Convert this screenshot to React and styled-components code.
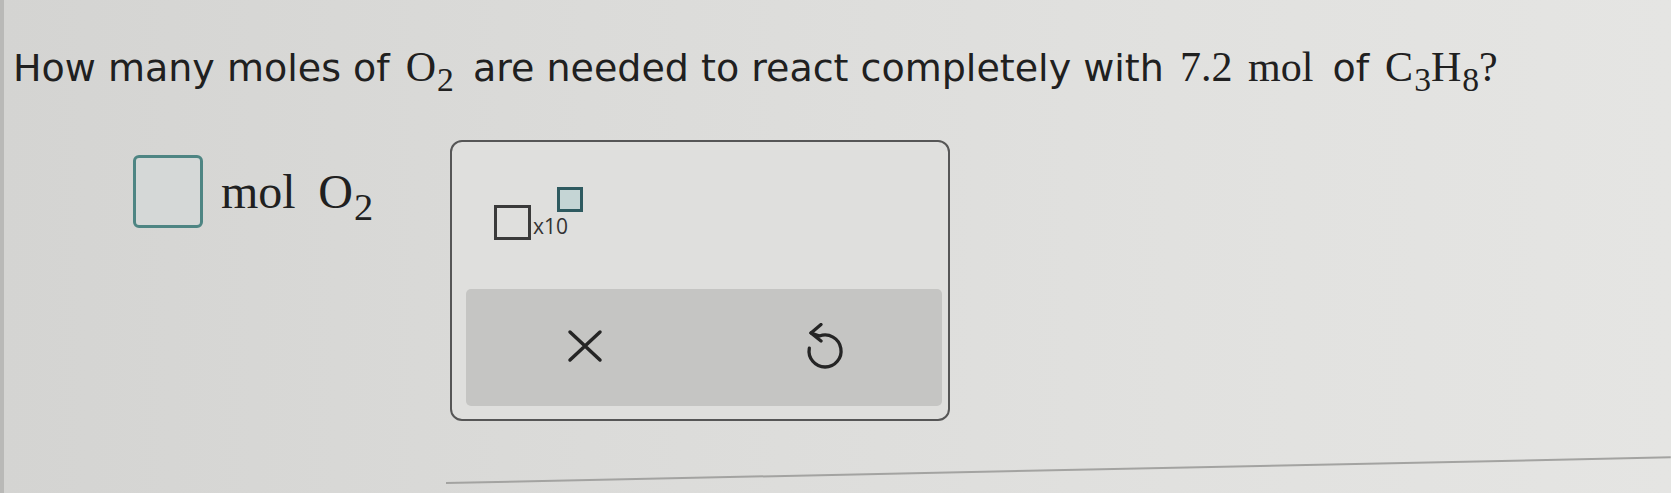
import React from 'react'
import styled, { createGlobalStyle } from 'styled-components'

const GlobalStyle = createGlobalStyle`
  html, body {
    margin: 0;
    padding: 0;
    background: #dcdcda;
  }
`;

const Page = styled.div`
  width: 1671px;
  height: 493px;
  box-sizing: border-box;
  overflow: hidden;
  padding: 42px 0 0 9px;
  background: linear-gradient(90deg, #d4d4d2 0%, #dbdbd9 35%, #e1e1df 70%, #e5e5e3 100%);
  border-left: 4px solid #b9b9b7;
  display: flex;
  flex-direction: column;
  color: #202020;
`;

const Question = styled.div`
  font-family: "DejaVu Sans", Verdana, sans-serif;
  font-size: 38px;
  line-height: 50px;
  height: 50px;
  white-space: nowrap;
`;

const Chem = styled.span`
  font-family: "Liberation Serif", "Times New Roman", serif;
  font-size: 42px;
  margin: 0 7px 0 4px;
  word-spacing: 0.12em;
`;

const Sub = styled.sub`
  font-size: 0.8em;
  vertical-align: -0.3em;
  line-height: 0;
  margin-left: 1px;
`;

const Row = styled.div`
  display: flex;
  align-items: flex-start;
  margin-top: 48px;
`;

const AnswerGroup = styled.div`
  flex: 0 0 317px;
  box-sizing: border-box;
  display: flex;
  align-items: center;
  gap: 18px;
  margin: 15px 0 0 120px;
`;

const AnswerBox = styled.div`
  width: 64px;
  height: 67px;
  border: 3px solid #4e8583;
  border-radius: 6px;
  background: #d5d8d7;
`;

const Unit = styled.span`
  font-family: "Liberation Serif", "Times New Roman", serif;
  font-size: 48px;
  line-height: 55px;
  word-spacing: 0.22em;
  white-space: nowrap;
`;

const Panel = styled.div`
  width: 500px;
  height: 281px;
  box-sizing: border-box;
  border: 2px solid #565656;
  border-radius: 12px;
  background: #dfdfdd;
  padding: 45px 6px 13px 14px;
  display: flex;
  flex-direction: column;
`;

const SciRow = styled.div`
  display: flex;
  align-items: flex-start;
  margin-left: 28px;
`;

const Mantissa = styled.div`
  width: 37px;
  height: 35px;
  margin-top: 18px;
  border: 3px solid #3a3a3a;
  box-sizing: border-box;
`;

const Times = styled.span`
  align-self: flex-end;
  font-family: "Open Sans", "DejaVu Sans", sans-serif;
  font-size: 21px;
  line-height: 1;
  margin: 0 0 3px 2px;
  color: #333;
`;

const Exponent = styled.div`
  width: 26px;
  height: 25px;
  margin-left: -11px;
  border: 3px solid #2e5a60;
  box-sizing: border-box;
  background: #c5d5d5;
`;

const ButtonBar = styled.div`
  margin-top: auto;
  height: 117px;
  background: #c5c5c3;
  border-radius: 5px;
  display: grid;
  grid-template-columns: 1fr 1fr;
  align-items: center;
  justify-items: center;
`;

const IconButton = styled.button`
  border: none;
  background: transparent;
  padding: 0;
  display: flex;
  align-items: center;
  justify-content: center;
  color: #252525;
  margin-top: -4px;
  margin-left: ${p => p.$shift || 0}px;
`;

const Rule = styled.div`
  margin: auto 0 9px 433px;
  height: 2px;
  background: #a3a3a1;
  transform: rotate(-1.2deg);
  transform-origin: left center;
`;

function CloseIcon() {
  return (
    <svg width="36" height="34" viewBox="0 0 36 34" fill="none" stroke="currentColor" strokeWidth="3.5" strokeLinecap="round">
      <path d="M3 3 L33 31 M33 3 L3 31" />
    </svg>
  )
}

function UndoIcon() {
  return (
    <svg width="44" height="46" viewBox="0 0 44 46" fill="none" stroke="currentColor" strokeWidth="3.3" strokeLinecap="round" strokeLinejoin="round">
      <path d="M8 10 L16.5 13 A16 16 0 1 1 6.3 25.2" />
      <path d="M18 1.5 L8 10 L18 18" />
    </svg>
  )
}

export default function App() {
  return (
    <>
      <GlobalStyle />
      <Page>
        <Question>
          How many moles of <Chem>O<Sub>2</Sub></Chem> are needed to react completely with{' '}
          <Chem>7.2 mol</Chem> of <Chem>C<Sub>3</Sub>H<Sub>8</Sub>?</Chem>
        </Question>
        <Row>
          <AnswerGroup>
            <AnswerBox />
            <Unit>mol O<Sub>2</Sub></Unit>
          </AnswerGroup>
          <Panel>
            <SciRow>
              <Mantissa />
              <Times>x10</Times>
              <Exponent />
            </SciRow>
            <ButtonBar>
              <IconButton aria-label="clear"><CloseIcon /></IconButton>
              <IconButton $shift={4} aria-label="undo"><UndoIcon /></IconButton>
            </ButtonBar>
          </Panel>
        </Row>
        <Rule />
      </Page>
    </>
  )
}
